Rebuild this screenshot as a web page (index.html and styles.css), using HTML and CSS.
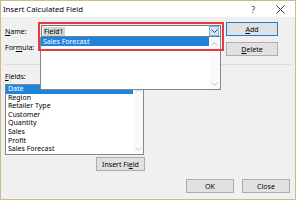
FILE: index.html
```html
<!DOCTYPE html>
<html>
<head>
<meta charset="utf-8">
<link rel="stylesheet" href="styles.css">
</head>
<body>
<div class="window">
  <div class="titlebar">
    <span class="title">Insert Calculated Field</span>
    <span class="help">?</span>
    <svg class="close" width="9" height="9" viewBox="0 0 9 9"><path d="M0.5 0.5 L8.5 8.5 M8.5 0.5 L0.5 8.5" stroke="#333" stroke-width="1" fill="none"/></svg>
  </div>
  <div class="body">
    <div class="top">
      <div class="form">
        <span class="lbl"><u>N</u>ame:</span>
        <div class="combo">
          <span class="combo-text"><span class="sel">Field1</span></span>
          <span class="combo-btn"><svg width="7" height="4" viewBox="0 0 7 4"><path d="M0.5 0.5 L3.5 3.5 L6.5 0.5" stroke="#444" fill="none"/></svg></span>
        </div>
        <span class="lbl">For<u>m</u>ula:</span>
        <div class="textbox"></div>
      </div>
      <div class="side-buttons">
        <div class="btn default"><u>A</u>dd</div>
        <div class="btn"><u>D</u>elete</div>
      </div>
    </div>
    <div class="sep"></div>
    <div class="fields">
      <span class="lbl"><u>F</u>ields:</span>
      <div class="listbox">
        <ul class="items">
          <li class="selected">Date</li>
          <li>Region</li>
          <li>Retailer Type</li>
          <li>Customer</li>
          <li>Quantity</li>
          <li>Sales</li>
          <li>Profit</li>
          <li>Sales Forecast</li>
        </ul>
        <div class="vscroll">
          <svg width="7" height="4" viewBox="0 0 7 4"><path d="M0.5 3.5 L3.5 0.5 L6.5 3.5" stroke="#c4c4c4" fill="none"/></svg>
          <svg width="7" height="4" viewBox="0 0 7 4"><path d="M0.5 0.5 L3.5 3.5 L6.5 0.5" stroke="#c4c4c4" fill="none"/></svg>
        </div>
      </div>
      <div class="btn insert">Insert Fi<u>e</u>ld</div>
    </div>
    <div class="footer">
      <div class="btn wide">OK</div>
      <div class="btn wide">Close</div>
    </div>
  </div>
  <div class="dropdown">
    <ul class="items">
      <li class="selected">Sales Forecast</li>
    </ul>
    <div class="vscroll">
      <svg width="7" height="4" viewBox="0 0 7 4"><path d="M0.5 3.5 L3.5 0.5 L6.5 3.5" stroke="#bdbdbd" fill="none"/></svg>
      <svg width="7" height="4" viewBox="0 0 7 4"><path d="M0.5 0.5 L3.5 3.5 L6.5 0.5" stroke="#bdbdbd" fill="none"/></svg>
    </div>
  </div>
  <div class="highlight"></div>
</div>
</body>
</html>
```
FILE: styles.css
```css
* { box-sizing: border-box; }
html, body { margin: 0; padding: 0; background: #f0f0f0; }
body { font-family: "Noto Sans", "Open Sans", sans-serif; font-size: 7px; color: #000; }
u { text-decoration: underline; text-underline-offset: 1px; }

.window {
  position: relative;
  width: 296px;
  height: 200px;
  border: 1px solid #cdb98a;
  background: #f0f0f0;
  display: flex;
  flex-direction: column;
}

.titlebar {
  height: 16px;
  background: #fff;
  display: flex;
  align-items: center;
  padding: 0 10px 0 2px;
}
.title { flex: 1; font-size: 7.7px; }
.help { font-size: 8px; color: #333; margin-right: 21px; }
.close { display: block; }

.body { padding: 0 4px; display: flex; flex-direction: column; }

.top { display: flex; align-items: flex-start; padding-top: 5px; }
.form {
  display: grid;
  grid-template-columns: 36px 180px;
  grid-template-rows: 12px 12px;
  row-gap: 4px;
  align-items: center;
  margin-top: 3px;
}
.lbl { line-height: 9px; }

.combo {
  height: 12px;
  background: #fff;
  border: 1px solid #7a7a7a;
  display: flex;
  align-items: center;
  padding-left: 1px;
}
.combo-text { flex: 1; display: flex; }
.sel { background: #d6d6d6; padding: 0 1px; line-height: 9px; }
.combo-btn {
  width: 10px;
  height: 10px;
  margin-right: 1px;
  background: #d4e6f7;
  border: 1px solid #7cb2e6;
  display: flex;
  align-items: center;
  justify-content: center;
}
.combo-btn svg { display: block; }

.textbox { height: 12px; background: #fff; border: 1px solid #7a7a7a; }

.side-buttons { margin-left: 5px; display: flex; flex-direction: column; gap: 6px; }

.btn {
  width: 52px;
  height: 14px;
  background: #e1e1e1;
  border: 1px solid #adadad;
  display: flex;
  align-items: center;
  justify-content: center;
  line-height: 9px;
}
.btn.default { border-color: #1a7fd6; }

.sep { height: 1px; background: #dcdcdc; margin-top: 8px; }

.fields { display: flex; flex-direction: column; align-items: flex-start; margin-top: 7px; }
.listbox {
  margin-top: 3px;
  width: 139px;
  height: 71px;
  background: #fff;
  border: 1px solid #828790;
  display: flex;
}
.items { list-style: none; margin: 0; padding: 0; flex: 1; }
.items li { line-height: 8.6px; height: 8.6px; padding-left: 2px; white-space: nowrap; }
.items li.selected { background: #1e84e0; color: #fff; }

.vscroll {
  width: 10px;
  display: flex;
  flex-direction: column;
  justify-content: space-between;
  align-items: center;
  padding: 4px 0 3px;
  background: #fafafa;
}
.vscroll svg { display: block; }

.insert { width: 49px; margin-top: 2px; align-self: flex-end; margin-right: 146px; }

.footer { display: flex; justify-content: flex-end; gap: 8px; margin-top: 8px; margin-right: 1px; }
.btn.wide { width: 48px; }

.dropdown {
  position: absolute;
  left: 39px;
  top: 36px;
  width: 181px;
  height: 53px;
  background: #fff;
  border: 1px solid #828790;
  border-top: none;
  display: flex;
}
.dropdown .items li { height: 9px; line-height: 9px; padding-left: 2px; }
.dropdown .vscroll { width: 11px; padding: 5px 0 3px; }

.highlight {
  position: absolute;
  left: 37px;
  top: 21px;
  width: 186px;
  height: 29px;
  border: 2px solid #e8393f;
}
```
